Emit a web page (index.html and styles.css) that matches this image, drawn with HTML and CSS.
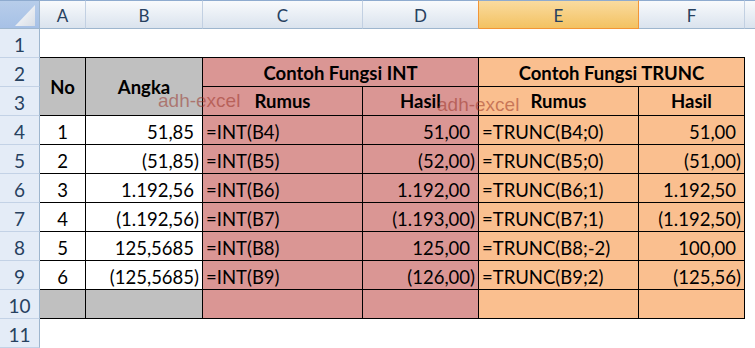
FILE: index.html
```html
<!DOCTYPE html>
<html>
<head>
<meta charset="utf-8">
<link rel="stylesheet" href="styles.css">
</head>
<body>
<div class="sheet">
  <div class="corner"><svg class="tri" width="20" height="21" viewBox="0 0 20 21"><defs><linearGradient id="tg" x1="0" y1="0" x2="1" y2="1"><stop offset="0" stop-color="#ffffff"/><stop offset="1" stop-color="#d7dde6"/></linearGradient></defs><polygon points="20,0 20,21 0,21" fill="url(#tg)"/></svg></div>
  <div class="ch">A</div>
  <div class="ch">B</div>
  <div class="ch">C</div>
  <div class="ch presel">D</div>
  <div class="ch sel">E</div>
  <div class="ch">F</div>
  <div class="ch end"></div>

  <div class="rh">1</div>
  <div class="blank toprow"></div>
  <div class="blank"></div>

  <div class="rh">2</div>
  <div class="c gray hdr tall">No</div>
  <div class="c gray hdr tall">Angka</div>
  <div class="c pink hdr wide">Contoh Fungsi INT</div>
  <div class="c orange hdr wide">Contoh Fungsi TRUNC</div>
  <div class="blank"></div>

  <div class="rh">3</div>
  <div class="c pink hdr">Rumus</div>
  <div class="c pink hdr">Hasil</div>
  <div class="c orange hdr">Rumus</div>
  <div class="c orange hdr">Hasil</div>
  <div class="blank"></div>

  <div class="rh">4</div>
  <div class="c white mid">1</div>
  <div class="c white num">51,85<span class="pad">)</span></div>
  <div class="c pink">=INT(B4)</div>
  <div class="c pink num">51,00<span class="pad">)</span></div>
  <div class="c orange">=TRUNC(B4;0)</div>
  <div class="c orange num">51,00<span class="pad">)</span></div>
  <div class="blank"></div>

  <div class="rh">5</div>
  <div class="c white mid">2</div>
  <div class="c white num">(51,85)</div>
  <div class="c pink">=INT(B5)</div>
  <div class="c pink num">(52,00)</div>
  <div class="c orange">=TRUNC(B5;0)</div>
  <div class="c orange num">(51,00)</div>
  <div class="blank"></div>

  <div class="rh">6</div>
  <div class="c white mid">3</div>
  <div class="c white num">1.192,56<span class="pad">)</span></div>
  <div class="c pink">=INT(B6)</div>
  <div class="c pink num">1.192,00<span class="pad">)</span></div>
  <div class="c orange">=TRUNC(B6;1)</div>
  <div class="c orange num">1.192,50<span class="pad">)</span></div>
  <div class="blank"></div>

  <div class="rh">7</div>
  <div class="c white mid">4</div>
  <div class="c white num">(1.192,56)</div>
  <div class="c pink">=INT(B7)</div>
  <div class="c pink num">(1.193,00)</div>
  <div class="c orange">=TRUNC(B7;1)</div>
  <div class="c orange num">(1.192,50)</div>
  <div class="blank"></div>

  <div class="rh">8</div>
  <div class="c white mid">5</div>
  <div class="c white num">125,5685<span class="pad">)</span></div>
  <div class="c pink">=INT(B8)</div>
  <div class="c pink num">125,00<span class="pad">)</span></div>
  <div class="c orange">=TRUNC(B8;-2)</div>
  <div class="c orange num">100,00<span class="pad">)</span></div>
  <div class="blank"></div>

  <div class="rh">9</div>
  <div class="c white mid">6</div>
  <div class="c white num">(125,5685)</div>
  <div class="c pink">=INT(B9)</div>
  <div class="c pink num">(126,00)</div>
  <div class="c orange">=TRUNC(B9;2)</div>
  <div class="c orange num">(125,56)</div>
  <div class="blank"></div>

  <div class="rh">10</div>
  <div class="c gray"></div>
  <div class="c gray"></div>
  <div class="c pink"></div>
  <div class="c pink"></div>
  <div class="c orange"></div>
  <div class="c orange"></div>
  <div class="blank"></div>

  <div class="rh">11</div>
  <div class="blank rest"></div>

  <div class="wm wm1">adh-excel</div>
  <div class="wm wm2">adh-excel</div>
</div>
</body>
</html>
```

FILE: styles.css
```css
* { box-sizing: border-box; }

html, body {
  margin: 0;
  padding: 0;
  background: #ffffff;
}

.sheet {
  position: relative;
  width: 755px;
  height: 348px;
  display: grid;
  grid-template-columns: 40px 46px 117px 160px 116px 160px 106px 1fr;
  grid-template-rows: repeat(12, 29px);
  font-family: Lato, "Liberation Sans", sans-serif;
  font-size: 18.5px;
  color: #000;
  overflow: hidden;
}

.corner {
  background: linear-gradient(#b7cdea, #a7c1e6);
  border-top: 1px solid #8eabcf;
  border-right: 1px solid #9eb6ce;
  border-bottom: 1px solid #9eb6ce;
  position: relative;
}

.tri {
  position: absolute;
  right: 4px;
  bottom: 2px;
}

.ch {
  background: linear-gradient(#f8fafc, #dae3ee);
  border-top: 1px solid #8eabcf;
  border-right: 1px solid #c2d0e2;
  border-bottom: 1px solid #9eb6ce;
  display: flex;
  align-items: center;
  justify-content: center;
  padding-top: 3px;
  font-size: 17px;
  line-height: 22px;
  color: #27415f;
}

.ch.presel { border-right-color: #f29536; }

.ch.sel {
  background: linear-gradient(#fadb9f, #f3c262);
  border-right-color: #f29536;
  border-bottom-color: #f29536;
}

.ch.end { border-right: none; }

.rh {
  background: #e4ecf7;
  border-right: 1px solid #9eb6ce;
  border-bottom: 1px solid #c3d2e6;
  display: flex;
  align-items: flex-end;
  justify-content: center;
  padding-bottom: 1px;
  font-size: 19px;
  line-height: 22px;
  color: #27415f;
}

.blank { background: #ffffff; }

.toprow {
  grid-column: span 6;
  border-bottom: 1px solid #000;
}

.rest { grid-column: span 7; }

.c {
  border-right: 1px solid #000;
  border-bottom: 1px solid #000;
  display: flex;
  align-items: flex-end;
  justify-content: flex-start;
  padding: 0 3px 1px 3px;
  line-height: 22px;
  white-space: nowrap;
}

.white { background: #ffffff; }
.gray { background: #c0c0c0; }
.pink { background: #da9694; }
.orange { background: #fabf8f; }

.mid { justify-content: center; }
.num { justify-content: flex-end; }

.pad { visibility: hidden; }

.hdr {
  font-weight: 700;
  justify-content: center;
  align-items: center;
  padding: 0;
}

.hdr.tall { grid-row: span 2; }
.hdr.wide { grid-column: span 2; padding-top: 1px; }

.wm {
  position: absolute;
  font-family: "Liberation Sans", Arial, sans-serif;
  font-size: 19px;
  line-height: 19px;
  color: rgba(150, 45, 30, 0.5);
  white-space: nowrap;
  pointer-events: none;
}

.wm1 { left: 158px; top: 91px; }
.wm2 { left: 437px; top: 95px; }
```
